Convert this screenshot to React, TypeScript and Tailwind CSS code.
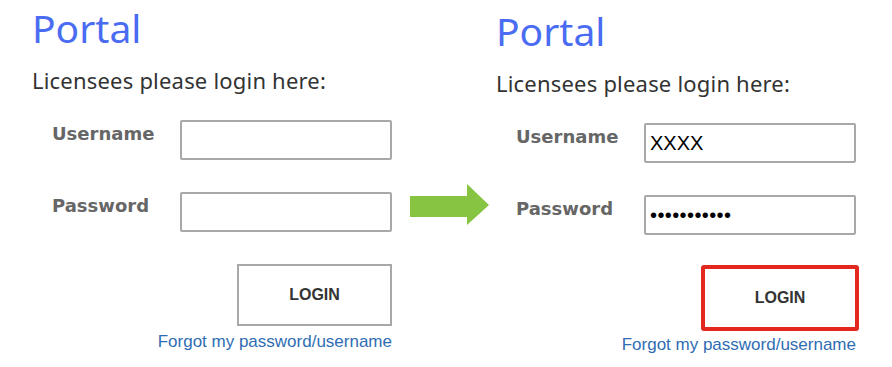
const SANS = "font-['Noto_Sans',sans-serif]";
const ARIAL = "font-['Liberation_Sans',Arial,sans-serif]";

type PanelProps = {
  filled?: boolean;
  highlight?: boolean;
};

function Field({ label, type, value }: { label: string; type: string; value: string }) {
  return (
    <div className="flex items-start">
      <label className="mt-[5px] ml-[20px] w-[128px] font-['DejaVu_Sans',sans-serif] text-[18px] leading-[18px] font-bold text-[#666666]">
        {label}
      </label>
      <input
        readOnly
        type={type}
        value={value}
        className={`h-[40px] w-[212px] rounded-[2px] border-2 border-[#a8a8a8] bg-white px-[4px] text-[20px] text-black outline-none ${ARIAL} ${
          type === 'password' ? 'tracking-[0.4px]' : ''
        }`}
      />
    </div>
  );
}

function Panel({ filled, highlight }: PanelProps) {
  return (
    <div className={`flex w-[360px] shrink-0 flex-col ${highlight ? 'pt-[11px]' : 'pt-[8px]'}`}>
      <h1 className={`${SANS} text-[39px] leading-[39px] font-normal text-[#4a6cf2]`}>Portal</h1>
      <p className={`${SANS} mt-[22px] text-[22px] leading-[22px] tracking-[0.2px] text-[#333333]`}>
        Licensees please login here:
      </p>
      <div className="mt-[29px] flex flex-col gap-[32px]">
        <Field label="Username" type="text" value={filled ? 'XXXX' : ''} />
        <Field label="Password" type="password" value={filled ? 'xxxxxxxxxxx' : ''} />
      </div>
      <button
        type="button"
        className={`self-end bg-white ${ARIAL} text-[16px] font-bold text-[#333333] ${
          highlight
            ? '-mr-[3px] mt-[30px] h-[66px] w-[158px] rounded-[3px] border-4 border-[#e3271e]'
            : 'mt-[32px] h-[62px] w-[155px] border-2 border-[#a8a8a8]'
        }`}
      >
        LOGIN
      </button>
      <a
        href="#"
        className={`self-end ${ARIAL} text-[17px] leading-[17px] text-[#2f6db3] ${
          highlight ? 'mt-[5px]' : 'mt-[7px]'
        }`}
      >
        Forgot my password/username
      </a>
    </div>
  );
}

export default function App() {
  return (
    <div className="flex h-[367px] w-[892px] overflow-hidden bg-white pl-[32px]">
      <Panel />
      <div className="w-[104px] shrink-0">
        <svg className="mt-[184px] ml-[18px]" width="79" height="41" viewBox="0 0 79 41">
          <polygon points="0,12 57,12 57,0 79,21 57,41 57,33 0,33" fill="#86c441" />
        </svg>
      </div>
      <Panel filled highlight />
    </div>
  );
}
